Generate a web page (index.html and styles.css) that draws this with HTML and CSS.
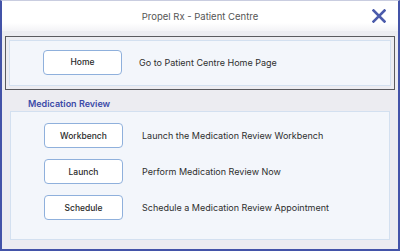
FILE: index.html
```html
<!DOCTYPE html>
<html>
<head>
<meta charset="utf-8">
<link rel="stylesheet" href="styles.css">
</head>
<body>
<div class="window">
  <div class="titlebar">
    <span class="title">Propel Rx - Patient Centre</span>
    <span class="close">
      <svg width="14" height="14" viewBox="0 0 14 14"><path d="M1.5 1.5 L12.5 12.5 M12.5 1.5 L1.5 12.5" stroke="#4b5bab" stroke-width="2.6" stroke-linecap="square"/></svg>
    </span>
  </div>
  <div class="body">
    <div class="home-frame">
      <div class="panel home-panel">
        <div class="row">
          <button class="btn">Home</button>
          <span class="desc">Go to Patient Centre Home Page</span>
        </div>
      </div>
    </div>
    <div class="section-label">Medication Review</div>
    <div class="panel med-panel">
      <div class="row">
        <button class="btn">Workbench</button>
        <span class="desc">Launch the Medication Review Workbench</span>
      </div>
      <div class="row">
        <button class="btn">Launch</button>
        <span class="desc">Perform Medication Review Now</span>
      </div>
      <div class="row">
        <button class="btn">Schedule</button>
        <span class="desc">Schedule a Medication Review Appointment</span>
      </div>
    </div>
  </div>
</div>
</body>
</html>
```
FILE: styles.css
```css
* { box-sizing: border-box; }
html, body { margin: 0; padding: 0; }
body {
  width: 400px;
  height: 251px;
  font-family: Inter, "Noto Sans", sans-serif;
  background: #fff;
}
.window {
  width: 400px;
  height: 251px;
  border: 2px solid #4353a8;
  border-top: 1px solid #c9cde0;
  display: flex;
  flex-direction: column;
  background: #ececf1;
}
.titlebar {
  height: 30px;
  flex: none;
  background: linear-gradient(#ffffff 0, #ffffff 22px, #f3f3f6 30px);
  display: flex;
  align-items: center;
  justify-content: center;
  position: relative;
}
.title {
  font-size: 9.5px;
  color: #555;
}
.close {
  position: absolute;
  right: 12px;
  top: 8px;
  width: 14px;
  height: 14px;
  display: flex;
}
.body {
  flex: 1;
  padding: 5px 3px 0 3px;
  display: flex;
  flex-direction: column;
}
.home-frame {
  border: 1.5px solid #5a5a5e;
  padding: 3px 3px;
  height: 54px;
}
.panel {
  background: #f3f6fb;
  border: 1px solid #d3e0f0;
}
.home-panel {
  height: 100%;
  display: flex;
  align-items: center;
  padding-left: 33px;
  padding-bottom: 2px;
}
.row {
  display: flex;
  align-items: center;
}
.btn {
  width: 79px;
  height: 25px;
  background: #fff;
  border: 1.5px solid #8fb0dc;
  border-radius: 4px;
  font-family: inherit;
  font-size: 8.5px;
  font-weight: 500;
  color: #2a2a2a;
  padding: 0;
  margin: 0;
}
.desc {
  margin-left: 17px;
  font-size: 9px;
  color: #2e2e2e;
}
.section-label {
  margin: 8px 0 0 23px;
  font-size: 9px;
  font-weight: 600;
  color: #3b4aa8;
  height: 12px;
  line-height: 12px;
}
.med-panel {
  margin: 1px 5px 0 5px;
  height: 129px;
  padding: 11px 0 0 33px;
  display: flex;
  flex-direction: column;
  gap: 11px;
}
.med-panel .desc { margin-left: 19px; }
```
